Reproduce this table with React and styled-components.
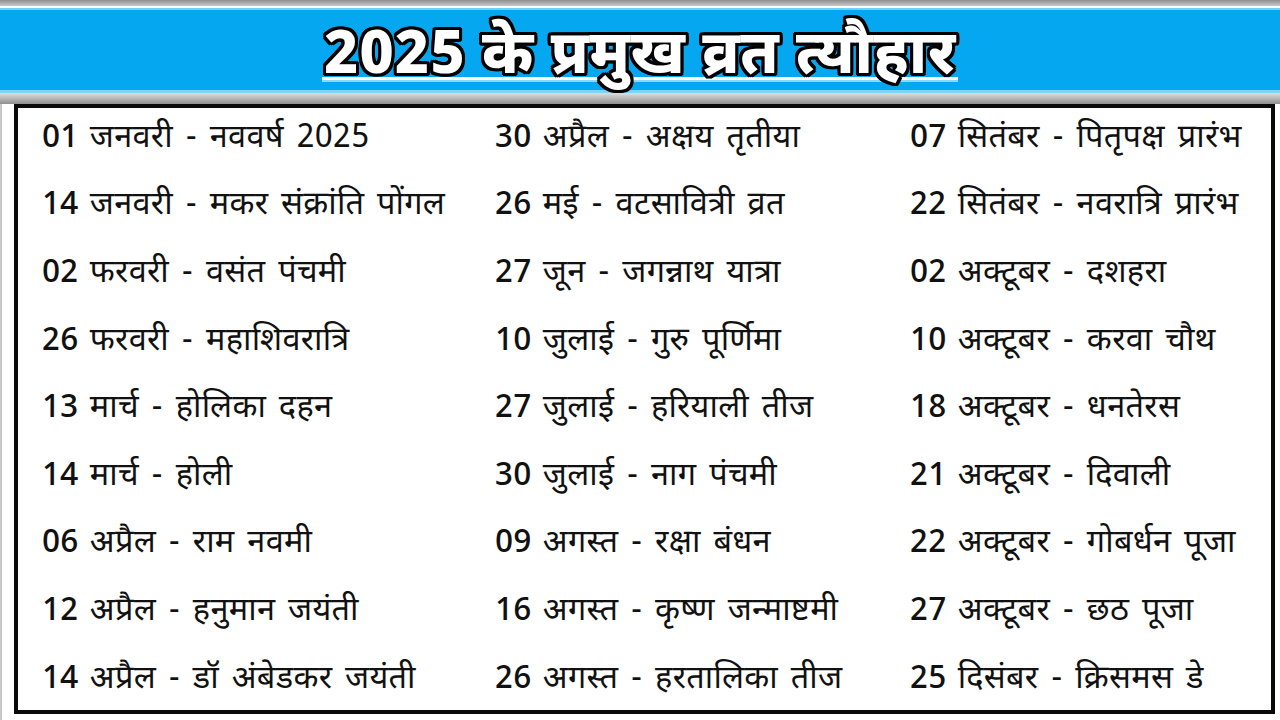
import React from 'react'
import styled, { createGlobalStyle } from 'styled-components'

const Global = createGlobalStyle`
  html, body { margin: 0; padding: 0; background: #fff; }
  body { width: 1280px; height: 720px; overflow: hidden; }
`

const Page = styled.div`
  width: 1280px;
  height: 720px;
  display: flex;
  flex-direction: column;
  background: #f4f4f4;
  font-family: "Noto Sans Devanagari", "Noto Sans", "Lohit Devanagari", "Open Sans", sans-serif;
`

const TopStrip = styled.div`
  flex-shrink: 0;
  height: 6px;
  background: linear-gradient(#8e8e8e, #c9c9c9);
  border-bottom: 2px solid #fafafa;
`

const Banner = styled.header`
  flex-shrink: 0;
  height: 80px;
  background: #05a8f0;
  border-top: 2px solid #6fd0fb;
  border-bottom: 3px solid #7ad4fb;
  display: flex;
  justify-content: center;
  align-items: flex-start;
  position: relative;
  z-index: 1;
`

const Title = styled.h1`
  margin: 0;
  margin-top: 7px;
  padding: 13px 2px 0;
  height: 47px;
  line-height: 58px;
  font-size: 60.5px;
  font-weight: 800;
  color: #fff;
  letter-spacing: 0.8px;
  white-space: nowrap;
  border-bottom: 3px solid #fff;
  box-shadow: 0 2px 0 #8ad9fb;
  text-shadow:
    3px 0 0 #000, -3px 0 0 #000, 0 3px 0 #000, 0 -3px 0 #000,
    2px 2px 0 #000, -2px 2px 0 #000, 2px -2px 0 #000, -2px -2px 0 #000,
    3px 2px 0 #000, -3px 2px 0 #000, 3px -2px 0 #000, -3px -2px 0 #000,
    2px 3px 0 #000, -2px 3px 0 #000, 2px -3px 0 #000, -2px -3px 0 #000;
`

const Gap = styled.div`
  flex-shrink: 0;
  height: 11px;
  background: linear-gradient(#dedede, #8f8f8f);
`

const Frame = styled.div`
  flex: 1;
  min-height: 0;
  display: flex;
  padding: 0 5px 6px 12px;
  background: #fff;
  border-left: 2px solid #c8c8c8;
`

const Panel = styled.main`
  flex: 1;
  min-height: 0;
  border: 4px solid #0a0a0a;
  background: #fff;
  display: grid;
  grid-template-columns: 453px 415px 1fr;
  grid-template-rows: repeat(9, 67.6px);
  grid-auto-flow: column;
  align-content: start;
  padding: 0 0 0 24px;
  box-sizing: border-box;
  overflow: hidden;
`

const Item = styled.div`
  display: flex;
  align-items: center;
  font-size: 32.5px;
  font-weight: 400;
  color: #111;
  white-space: nowrap;
  word-spacing: 4px;
  letter-spacing: 0.3px;
  padding-bottom: 6px;
`

const Num = styled.span`
  font-weight: 500;
  margin-right: 11px;
`

const data = [
  ['01', 'जनवरी - नववर्ष 2025'],
  ['14', 'जनवरी - मकर संक्रांति पोंगल'],
  ['02', 'फरवरी - वसंत पंचमी'],
  ['26', 'फरवरी - महाशिवरात्रि'],
  ['13', 'मार्च - होलिका दहन'],
  ['14', 'मार्च - होली'],
  ['06', 'अप्रैल - राम नवमी'],
  ['12', 'अप्रैल - हनुमान जयंती'],
  ['14', 'अप्रैल - डॉ अंबेडकर जयंती'],
  ['30', 'अप्रैल - अक्षय तृतीया'],
  ['26', 'मई - वटसावित्री व्रत'],
  ['27', 'जून - जगन्नाथ यात्रा'],
  ['10', 'जुलाई - गुरु पूर्णिमा'],
  ['27', 'जुलाई - हरियाली तीज'],
  ['30', 'जुलाई - नाग पंचमी'],
  ['09', 'अगस्त - रक्षा बंधन'],
  ['16', 'अगस्त - कृष्ण जन्माष्टमी'],
  ['26', 'अगस्त - हरतालिका तीज'],
  ['07', 'सितंबर - पितृपक्ष प्रारंभ'],
  ['22', 'सितंबर - नवरात्रि प्रारंभ'],
  ['02', 'अक्टूबर - दशहरा'],
  ['10', 'अक्टूबर - करवा चौथ'],
  ['18', 'अक्टूबर - धनतेरस'],
  ['21', 'अक्टूबर - दिवाली'],
  ['22', 'अक्टूबर - गोबर्धन पूजा'],
  ['27', 'अक्टूबर - छठ पूजा'],
  ['25', 'दिसंबर - क्रिसमस डे'],
]

export default function App() {
  return (
    <Page>
      <Global />
      <TopStrip />
      <Banner>
        <Title>2025 के प्रमुख व्रत त्यौहार</Title>
      </Banner>
      <Gap />
      <Frame>
        <Panel>
          {data.map(([d, t], i) => (
            <Item key={i}>
              <Num>{d}</Num>
              {t}
            </Item>
          ))}
        </Panel>
      </Frame>
    </Page>
  )
}
